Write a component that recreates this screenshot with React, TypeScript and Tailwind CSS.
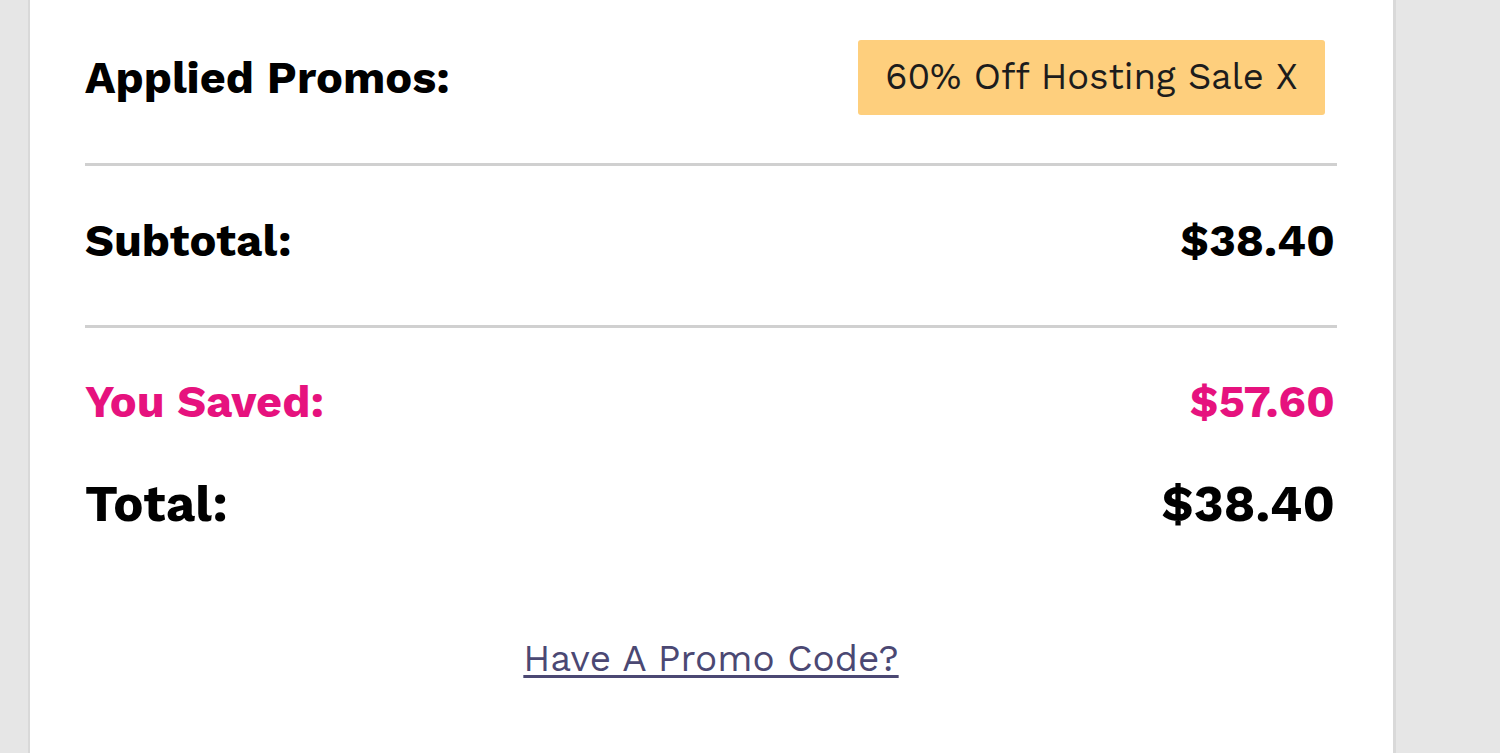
import React from 'react';

const FONT = { fontFamily: '"Work Sans", Inter, "Liberation Sans", sans-serif' };

export default function App() {
  return (
    <div className="min-h-[753px] bg-[#e6e6e6] pl-[28px] pr-[104px]" style={FONT}>
      <div className="min-h-[753px] bg-white border-l-[2px] border-r-[3px] border-[#d9d9d9] pl-[55px] pr-[56px] pt-[40px]">
        <div className="flex items-center justify-between pr-[12px]">
          <span className="text-[45px] leading-none font-bold text-black">Applied Promos:</span>
          <button className="h-[75px] w-[467px] rounded-[3px] bg-[#fecf7d] text-[36.5px] leading-none text-[#1c1c1c]">
            60% Off Hosting Sale X
          </button>
        </div>

        <div className="mt-[48px] h-[3px] bg-[#d0d0d0]" />

        <div className="flex h-[159px] items-center justify-between pb-[10px] pr-[2px] text-[45px] leading-none font-bold text-black">
          <span>Subtotal:</span>
          <span>$38.40</span>
        </div>

        <div className="h-[3px] bg-[#d0d0d0]" />

        <div className="mt-[51px] flex items-center justify-between pr-[2px] text-[45px] leading-none font-bold text-[#e6127e]">
          <span>You Saved:</span>
          <span>$57.60</span>
        </div>

        <div className="mt-[55px] flex items-center justify-between pr-[2px] text-[50.5px] leading-none font-bold text-black">
          <span>Total:</span>
          <span>$38.40</span>
        </div>

        <div className="mt-[110px] text-center leading-none">
          <a href="#" className="text-[37px] leading-none text-[#4b4873] underline underline-offset-[4px]">
            Have A Promo Code?
          </a>
        </div>
      </div>
    </div>
  );
}
